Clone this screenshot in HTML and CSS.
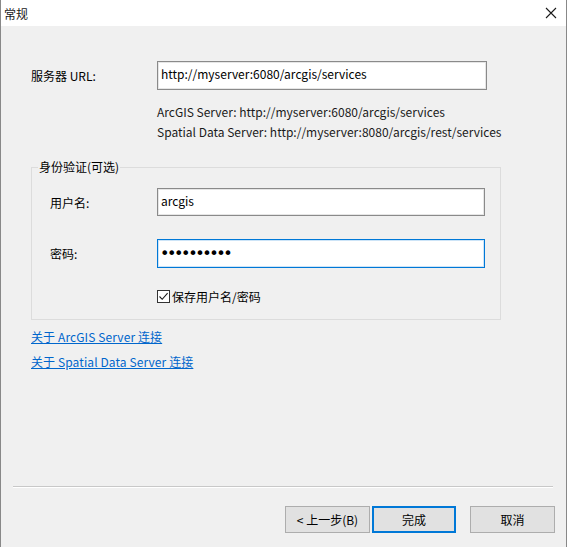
FILE: index.html
```html
<!DOCTYPE HTML>
<html>
    <head>
        <meta charset="utf-8">
        <link rel="stylesheet" href="styles.css">
    </head>

    <body>
        <div class="window">
            <div class="titlebar">
                <span class="title">常规</span>
                <svg class="close" width="12" height="12" viewBox="0 0 12 12">
                    <path d="M1 1 L11 11 M11 1 L1 11" stroke="#1a1a1a" stroke-width="1.1" fill="none"/>
                </svg>
            </div>

            <div class="content">
                <div class="row url-row">
                    <label for="url">服务器 URL:</label>
                    <input type="text" id="url" class="field" value="http://myserver:6080/arcgis/services">
                </div>

                <div class="hints">
                    <p>ArcGIS Server: http://myserver:6080/arcgis/services</p>
                    <p>Spatial Data Server: http://myserver:8080/arcgis/rest/services</p>
                </div>

                <fieldset class="auth">
                    <legend>身份验证(可选)</legend>

                    <div class="row user-row">
                        <label for="user">用户名:</label>
                        <input type="text" id="user" class="field" value="arcgis">
                    </div>

                    <div class="row pass-row">
                        <label for="pass">密码:</label>
                        <input type="password" id="pass" class="field active" value="arcgis1234">
                    </div>

                    <div class="save">
                        <span class="check">
                            <svg width="11" height="11" viewBox="0 0 11 11">
                                <path d="M1.5 5.5 L4.2 8.3 L9.6 2.2" stroke="#1a1a1a" stroke-width="1.1" fill="none"/>
                            </svg>
                        </span>
                        <span>保存用户名/密码</span>
                    </div>
                </fieldset>

                <div class="links">
                    <a href="#">关于 ArcGIS Server 连接</a>
                    <a href="#">关于 Spatial Data Server 连接</a>
                </div>
            </div>

            <div class="footer">
                <div class="separator"></div>
                <div class="buttons">
                    <button class="btn">&lt; 上一步(B)</button>
                    <button class="btn default">完成</button>
                    <button class="btn cancel">取消</button>
                </div>
            </div>
        </div>
    </body>
</html>
```

FILE: styles.css
```css
* {
    margin: 0;
    padding: 0;
    box-sizing: border-box;
}

body {
    font-family: "Noto Sans CJK SC", "Noto Sans", sans-serif;
    font-size: 12px;
    color: #000;
    background-color: #f0f0f0;
}

.window {
    width: 567px;
    height: 547px;
    border-left: 1px solid #888;
    border-right: 1px solid #888;
    background-color: #f0f0f0;
    display: flex;
    flex-direction: column;
}

.titlebar {
    height: 26px;
    background-color: #fff;
    display: flex;
    justify-content: space-between;
    align-items: center;
    padding: 0 9px 0 3px;
}

.title {
    font-size: 12px;
    color: #1a1a1a;
}

.content {
    padding: 35px 0 0 30px;
}

.row {
    display: grid;
    align-items: center;
}

.url-row {
    grid-template-columns: 126px 330px;
    height: 29px;
}

.field {
    height: 100%;
    width: 100%;
    font-family: inherit;
    font-size: 12px;
    color: #000;
    padding: 0 3px 4px;
    border: 1px solid #8a8a8a;
    box-shadow: inset 0 0 0 1px #e6e6e6;
    background-color: #fff;
    outline: none;
}

/* password box has focus, bullets drawn a bit larger */
.field.active {
    border-color: #0078d7;
    box-shadow: inset 0 0 0 1px #cde4f7;
    font-family: "DejaVu Sans", sans-serif;
    font-size: 16px;
    letter-spacing: -2.4px;
    padding: 0 0 0 2px;
}

.hints {
    margin: 12px 0 0 126px;
    line-height: 20px;
    color: #1a1a1a;
}

.auth {
    margin-top: 17px;
    width: 470px;
    border: 1px solid #dcdcdc;
    padding: 0 15px 15px 18px;
}

.auth legend {
    line-height: 16px;
    margin-left: -12px;
    padding: 0 1px;
}

.user-row,
.pass-row {
    grid-template-columns: 107px 328px;
}

.user-row {
    margin-top: 13px;
    height: 28px;
}

.pass-row {
    margin-top: 23px;
    height: 29px;
}

.save {
    margin: 20px 0 0 107px;
    height: 16px;
    display: flex;
    align-items: center;
    gap: 2px;
}

.check {
    width: 13px;
    height: 13px;
    border: 1px solid #333;
    background-color: #fff;
    display: flex;
    align-items: center;
    justify-content: center;
}

.links {
    margin-top: 7px;
    display: flex;
    flex-direction: column;
    align-items: flex-start;
    gap: 5px;
    line-height: 20px;
}

.links a {
    color: #0066cc;
    text-decoration: underline;
    letter-spacing: 0.1px;
}

.footer {
    margin-top: auto;
    padding-bottom: 14px;
}

.separator {
    margin: 0 13px 0 12px;
    border-top: 1px solid #c8c8c8;
    border-bottom: 1px solid #fff;
}

.buttons {
    margin-top: 18px;
    display: flex;
    justify-content: flex-end;
    padding-right: 11px;
}

.btn {
    width: 85px;
    height: 27px;
    font-family: inherit;
    font-size: 12px;
    color: #000;
    background-color: #e1e1e1;
    border: 1px solid #adadad;
}

.btn.default {
    width: 84px;
    margin-left: 2px;
    border-color: #0078d7;
    box-shadow: inset 0 0 0 1px #0078d7;
}

.btn.cancel {
    margin-left: 14px;
}
```
